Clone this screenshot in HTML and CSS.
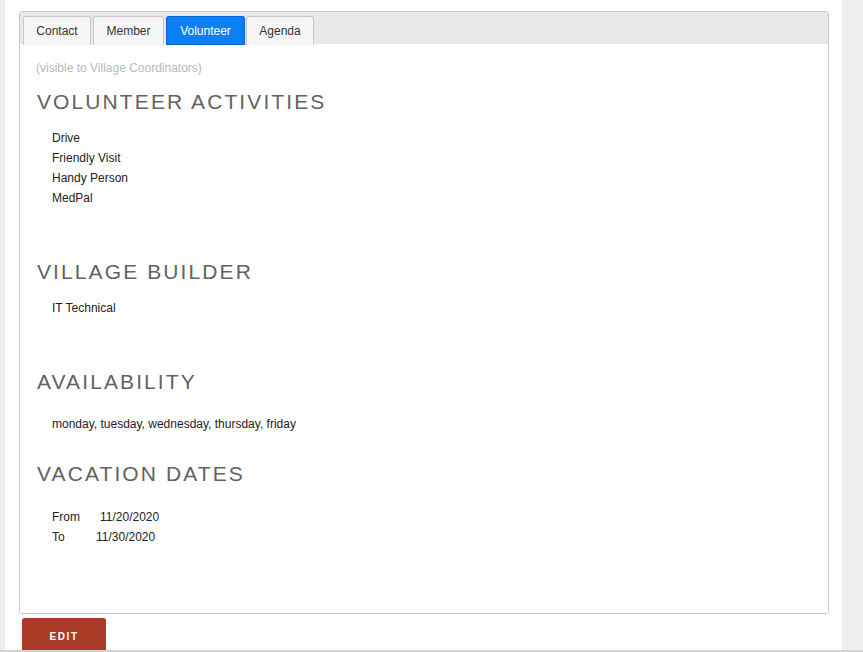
FILE: index.html
```html
<!DOCTYPE html>
<html lang="en">

<head>
    <meta charset="UTF-8">
    <meta name="viewport" content="width=device-width, initial-scale=1.0">
    <title>Volunteer</title>
    <link rel="stylesheet" href="styles.css">
</head>

<body>
    <div class="page">
        <div class="row">
            <div class="side side-left"></div>
            <div class="main">
                <div class="panel">
                    <ul class="tabs">
                        <li class="tab">Contact</li>
                        <li class="tab">Member</li>
                        <li class="tab active">Volunteer</li>
                        <li class="tab">Agenda</li>
                    </ul>
                    <div class="content">
                        <p class="note">(visible to Village Coordinators)</p>

                        <h3 class="section-title">Volunteer Activities</h3>
                        <ul class="items">
                            <li>Drive</li>
                            <li>Friendly Visit</li>
                            <li>Handy Person</li>
                            <li>MedPal</li>
                        </ul>

                        <h3 class="section-title">Village Builder</h3>
                        <ul class="items">
                            <li>IT Technical</li>
                        </ul>

                        <h3 class="section-title">Availability</h3>
                        <p class="days">monday, tuesday, wednesday, thursday, friday</p>

                        <h3 class="section-title">Vacation Dates</h3>
                        <table class="dates">
                            <tr><td class="label">From</td><td class="from">11/20/2020</td></tr>
                            <tr><td class="label">To</td><td class="to">11/30/2020</td></tr>
                        </table>
                    </div>
                </div>
                <button class="btn-edit">EDIT</button>
            </div>
            <div class="side side-right"></div>
        </div>
        <div class="bottom-line"></div>
    </div>
</body>

</html>
```

FILE: styles.css
```css
html,
body {
    margin: 0;
    padding: 0;
}

body {
    font-family: "Liberation Sans", Arial, sans-serif;
    font-size: 12px;
    color: #222;
    background: #fff;
}

ul {
    margin: 0;
    padding: 0;
}

li {
    list-style: none;
}

.page {
    height: 652px;
    display: flex;
    flex-direction: column;
}

.row {
    display: flex;
    height: 650px;
    overflow: hidden;
}

.side {
    background: #efefef;
}

.side-left { width: 5px; }
.side-right { width: 21px; }

.main {
    flex: 1;
    padding: 11px 0 0 14px;
}

.bottom-line {
    height: 2px;
    background: #d4d4d4;
}

.panel {
    width: 810px;
    height: 603px;
    box-sizing: border-box;
    border: 1px solid #c6c6c6;
    border-radius: 3px;
    overflow: hidden;
}

.tabs {
    display: flex;
    gap: 2px;
    height: 32px;
    box-sizing: border-box;
    padding: 4px 0 0 3px;
    background: #e8e8e8;
}

.tab {
    width: 66px;
    height: 28px;
    line-height: 28px;
    text-align: center;
    border: 1px solid #c8c8c8;
    border-bottom: none;
    border-radius: 3px 3px 0 0;
    background: #f6f6f6;
    color: #333;
}

.tab:nth-child(2) { width: 69px; }
.tab:nth-child(3) { width: 77px; }
.tab:nth-child(4) { width: 66px; margin-left: -1px; }

.tab.active {
    background: #0a7ff6;
    border-color: #0a62d0;
    color: #fff;
    box-shadow: inset 0 -1px 0 #0a5fc5;
}

.content {
    padding: 0 16px 0 16px;
}

.note {
    margin: 16px 0 0 0;
    line-height: 16px;
    color: #b9b9b9;
}

.section-title {
    margin: 14px 0 0 1px;
    font-size: 21px;
    line-height: 24px;
    font-weight: normal;
    letter-spacing: 2.1px;
    text-transform: uppercase;
    color: #626262;
}

.items {
    margin: 14px 0 52px 16px;
}

.items li {
    line-height: 20px;
}

.items + .section-title {
    margin-top: 0;
}

.days {
    margin: 20px 0 28px 16px;
    line-height: 20px;
}

.days + .section-title {
    margin-top: 0;
}

.dates {
    margin: 21px 0 0 14px;
    border-collapse: collapse;
    font-size: 12px;
}

.dates td {
    padding: 0 2px;
    height: 20px;
}

.dates .label {
    width: 44px;
}

.dates .to {
    position: relative;
    left: -4px;
}

.btn-edit {
    display: block;
    margin: 4px 0 0 3px;
    width: 84px;
    height: 38px;
    padding: 0;
    border: none;
    border-radius: 3px 3px 0 0;
    background: #a93a26;
    color: #fff;
    font-family: "Liberation Sans", Arial, sans-serif;
    font-size: 10px;
    font-weight: bold;
    letter-spacing: 1.6px;
    line-height: 38px;
}
```
